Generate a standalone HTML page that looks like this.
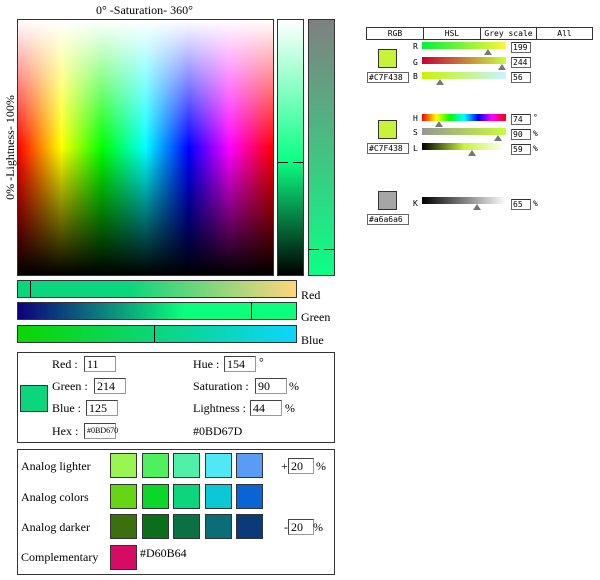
<!DOCTYPE html>
<html><head><style>
body{margin:0;width:600px;height:580px;background:#fff;font-family:"Liberation Serif",serif;font-size:12px;position:relative;overflow:hidden}
.a{position:absolute}
.b{border:1px solid #333;box-sizing:border-box}
.in{position:absolute;border:1px solid #999;border-top-color:#444;border-left-color:#444;box-sizing:border-box;height:16px;font-size:12px;padding-left:2px;line-height:14px;background:#fff}
.m{font-family:"DejaVu Sans Mono","Liberation Mono",monospace;font-size:8px}
.tab{position:absolute;top:27px;height:13px;border:1px solid #333;box-sizing:border-box;text-align:center;line-height:11px}
.bar{position:absolute;left:422px;width:84px;height:7px}
.tri{position:absolute;width:0;height:0;border-left:4px solid transparent;border-right:4px solid transparent;border-bottom:6px solid #777}
.vb{position:absolute;left:511px;width:20px;height:11px;border:1px solid #666;border-top-color:#333;box-sizing:border-box;background:#fff;line-height:9px;padding-left:1px}
.sw{position:absolute;width:27px;height:25px;border:1px solid #333;box-sizing:border-box}
.dash{position:absolute;height:1px;background:#000}
.vd{position:absolute;width:1px;background:#000}
</style></head><body>
<div class="a" style="left:96px;top:3px;font-size:12px">0° -Saturation- 360°</div>
<div class="a" style="left:-42px;top:140px;transform:rotate(-90deg);font-size:12px;white-space:nowrap">0% -Lightness- 100%</div>
<div class="a b" style="left:17px;top:19px;width:257px;height:257px;background:linear-gradient(to bottom,#fff 0%,rgba(255,255,255,0) 50%,rgba(0,0,0,0) 50%,#000 100%),linear-gradient(to right,#f00,#ff0 17%,#0f0 33%,#0ff 50%,#00f 67%,#f0f 83%,#f00)"></div>
<div class="a b" style="left:277px;top:19px;width:27px;height:257px;background:linear-gradient(#fff,#0bff85 55%,#000)"></div>
<div class="dash" style="left:278px;top:162px;width:25px;background:linear-gradient(to right,#000 40%,transparent 40%,transparent 60%,#000 60%)"></div>
<div class="a b" style="left:308px;top:19px;width:27px;height:257px;background:linear-gradient(#808080,#0bff85)"></div>
<div class="dash" style="left:309px;top:249px;width:25px;background:linear-gradient(to right,#000 40%,transparent 40%,transparent 60%,#000 60%)"></div>
<div class="a b" style="left:17px;top:280px;width:280px;height:18px;background:linear-gradient(to right,#0bd67d,#0bd67d 40%,#ffd67d)"></div>
<div class="vd" style="left:30px;top:281px;height:16px"></div>
<div class="a" style="left:301px;top:288px">Red</div>
<div class="a b" style="left:17px;top:302px;width:280px;height:18px;background:linear-gradient(to right,#0b007d,#0bff7d 60%,#0bff7d)"></div>
<div class="vd" style="left:251px;top:303px;height:16px"></div>
<div class="a" style="left:301px;top:310px">Green</div>
<div class="a b" style="left:17px;top:325px;width:280px;height:18px;background:linear-gradient(to right,#0bd600,#0bd67d 50%,#0bd6ff)"></div>
<div class="vd" style="left:154px;top:326px;height:16px"></div>
<div class="a" style="left:301px;top:333px">Blue</div>

<div class="a b" style="left:17px;top:352px;width:318px;height:91px"></div>
<div class="sw" style="left:20px;top:385px;width:28px;height:27px;background:#0bd67d"></div>
<div class="a" style="left:52px;top:357px">Red :</div><div class="in" style="left:84px;top:356px;width:32px">11</div>
<div class="a" style="left:52px;top:379px">Green :</div><div class="in" style="left:94px;top:378px;width:32px">214</div>
<div class="a" style="left:52px;top:401px">Blue :</div><div class="in" style="left:86px;top:400px;width:32px">125</div>
<div class="a" style="left:52px;top:424px">Hex :</div><div class="in" style="left:84px;top:423px;width:32px;font-size:8px">#0BD670</div>
<div class="a" style="left:193px;top:357px">Hue :</div><div class="in" style="left:224px;top:356px;width:32px">154</div><div class="a" style="left:259px;top:355px">°</div>
<div class="a" style="left:193px;top:379px">Saturation :</div><div class="in" style="left:255px;top:378px;width:32px">90</div><div class="a" style="left:289px;top:379px">%</div>
<div class="a" style="left:193px;top:401px">Lightness :</div><div class="in" style="left:250px;top:400px;width:32px">44</div><div class="a" style="left:285px;top:401px">%</div>
<div class="a" style="left:193px;top:424px">#0BD67D</div>

<div class="a b" style="left:17px;top:449px;width:318px;height:126px"></div>
<div class="a" style="left:21px;top:459px">Analog lighter</div>
<div class="a" style="left:21px;top:490px">Analog colors</div>
<div class="a" style="left:21px;top:520px">Analog darker</div>
<div class="a" style="left:21px;top:550px">Complementary</div>
<div class="sw" style="left:110px;top:453px;background:#99f550"></div>
<div class="sw" style="left:142px;top:453px;background:#4ef05e"></div>
<div class="sw" style="left:173px;top:453px;background:#50f0a8"></div>
<div class="sw" style="left:205px;top:453px;background:#50e8f5"></div>
<div class="sw" style="left:236px;top:453px;background:#5a9cf5"></div>
<div class="sw" style="left:110px;top:484px;background:#66d614"></div>
<div class="sw" style="left:142px;top:484px;background:#0bd62a"></div>
<div class="sw" style="left:173px;top:484px;background:#0bd67d"></div>
<div class="sw" style="left:205px;top:484px;background:#0bc8d6"></div>
<div class="sw" style="left:236px;top:484px;background:#0b64d6"></div>
<div class="sw" style="left:110px;top:514px;background:#3b700f"></div>
<div class="sw" style="left:142px;top:514px;background:#0b6e1a"></div>
<div class="sw" style="left:173px;top:514px;background:#0b7044"></div>
<div class="sw" style="left:205px;top:514px;background:#0b6d78"></div>
<div class="sw" style="left:236px;top:514px;background:#0b3a78"></div>
<div class="sw" style="left:110px;top:545px;background:#d60b64"></div>
<div class="a" style="left:140px;top:546px">#D60B64</div>
<div class="a" style="left:281px;top:459px">+</div><div class="in" style="left:288px;top:458px;width:26px">20</div><div class="a" style="left:316px;top:459px">%</div>
<div class="a" style="left:284px;top:520px">-</div><div class="in" style="left:288px;top:519px;width:26px">20</div><div class="a" style="left:313px;top:520px">%</div>

<div class="m">
<div class="tab" style="left:366px;width:58px">RGB</div>
<div class="tab" style="left:423px;width:58px">HSL</div>
<div class="tab" style="left:480px;width:57px">Grey scale</div>
<div class="tab" style="left:536px;width:57px">All</div>

<div class="sw" style="left:378px;top:49px;width:19px;height:19px;background:#c7f438"></div>
<div class="a b" style="left:367px;top:72px;width:42px;height:11px;border-color:#666;line-height:9px;padding-left:1px">#C7F438</div>
<div class="a" style="left:413px;top:42px">R</div><div class="bar" style="top:42px;background:linear-gradient(to right,#00f438,#fff438)"></div><div class="tri" style="left:484px;top:49px"></div><div class="vb" style="top:42px">199</div>
<div class="a" style="left:413px;top:58px">G</div><div class="bar" style="top:57px;background:linear-gradient(to right,#c70038,#c7ff38)"></div><div class="tri" style="left:498px;top:64px"></div><div class="vb" style="top:57px">244</div>
<div class="a" style="left:413px;top:72px">B</div><div class="bar" style="top:72px;background:linear-gradient(to right,#c7f400,#c7f4ff)"></div><div class="tri" style="left:436px;top:79px"></div><div class="vb" style="top:72px">56</div>

<div class="sw" style="left:378px;top:120px;width:19px;height:19px;background:#c7f438"></div>
<div class="a b" style="left:367px;top:143px;width:42px;height:11px;border-color:#666;line-height:9px;padding-left:1px">#C7F438</div>
<div class="a" style="left:413px;top:114px">H</div><div class="bar" style="top:114px;background:linear-gradient(to right,#f00,#ff0 17%,#0f0 33%,#0ff 50%,#00f 67%,#f0f 83%,#f00)"></div><div class="tri" style="left:435px;top:121px"></div><div class="vb" style="top:114px">74</div><div class="a" style="left:533px;top:113px">°</div>
<div class="a" style="left:413px;top:128px">S</div><div class="bar" style="top:128px;background:linear-gradient(to right,#969696,#c7ff38)"></div><div class="tri" style="left:494px;top:135px"></div><div class="vb" style="top:129px">90</div><div class="a" style="left:533px;top:129px">%</div>
<div class="a" style="left:413px;top:144px">L</div><div class="bar" style="top:143px;background:linear-gradient(to right,#000,#c7f438 50%,#fff)"></div><div class="tri" style="left:468px;top:150px"></div><div class="vb" style="top:144px">59</div><div class="a" style="left:533px;top:144px">%</div>

<div class="sw" style="left:378px;top:191px;width:19px;height:19px;background:#a6a6a6"></div>
<div class="a b" style="left:367px;top:214px;width:42px;height:11px;border-color:#666;line-height:9px;padding-left:1px">#a6a6a6</div>
<div class="a" style="left:413px;top:199px">K</div><div class="bar" style="top:197px;background:linear-gradient(to right,#000,#fff)"></div><div class="tri" style="left:473px;top:204px"></div><div class="vb" style="top:199px">65</div><div class="a" style="left:533px;top:199px">%</div>
</div>
</body></html>
